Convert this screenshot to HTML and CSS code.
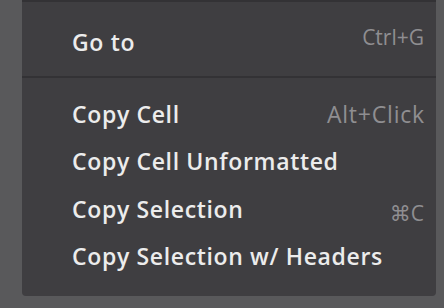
FILE: index.html
```html
<!DOCTYPE html>
<html>
<head>
<meta charset="utf-8">
<link rel="stylesheet" href="styles.css">
</head>
<body>
<div class="menu">
  <div class="section first">
    <div class="item">
      <span class="label">Go to</span>
      <span class="shortcut up">Ctrl+G</span>
    </div>
  </div>
  <div class="section second">
    <div class="item">
      <span class="label">Copy Cell</span>
      <span class="shortcut">Alt+Click</span>
    </div>
    <div class="item">
      <span class="label">Copy Cell Unformatted</span>
    </div>
    <div class="item">
      <span class="label">Copy Selection</span>
      <span class="shortcut down">⌘C</span>
    </div>
    <div class="item">
      <span class="label">Copy Selection w/ Headers</span>
    </div>
  </div>
</div>
</body>
</html>
```
FILE: styles.css
```css
html, body {
  margin: 0;
  padding: 0;
}
body {
  background: #59595b;
  width: 444px;
  height: 308px;
  overflow: hidden;
  font-family: "Open Sans", "DejaVu Sans", sans-serif;
}
.menu {
  margin-left: 22px;
  width: 414px;
  height: 296px;
  background: #3f3e41;
  border-radius: 0 0 4px 4px;
  border-top: 2px solid #333235;
  box-sizing: border-box;
  display: flex;
  flex-direction: column;
}
.section.first {
  height: 74px;
  display: flex;
  flex-direction: column;
  justify-content: center;
  border-bottom: 2px solid #333235;
}
.section.second {
  padding-top: 12px;
}
.item {
  height: 47.5px;
  display: flex;
  align-items: center;
  justify-content: space-between;
  padding: 0 12px 0 50px;
}
.section.first .item {
  padding-top: 5px;
}
.label {
  color: #ececec;
  font-weight: 600;
  font-size: 23px;
  letter-spacing: 0.65px;
}
.shortcut {
  color: #8f8e91;
  font-weight: 400;
  font-size: 23px;
  letter-spacing: 0.8px;
  margin-right: -1px;
}
.shortcut.up {
  margin-bottom: 10px;
  font-size: 21px;
  letter-spacing: 0;
  margin-right: 0;
}
.shortcut.down {
  margin-top: 8px;
  font-size: 21px;
  letter-spacing: 0;
  margin-right: 0;
}
```
